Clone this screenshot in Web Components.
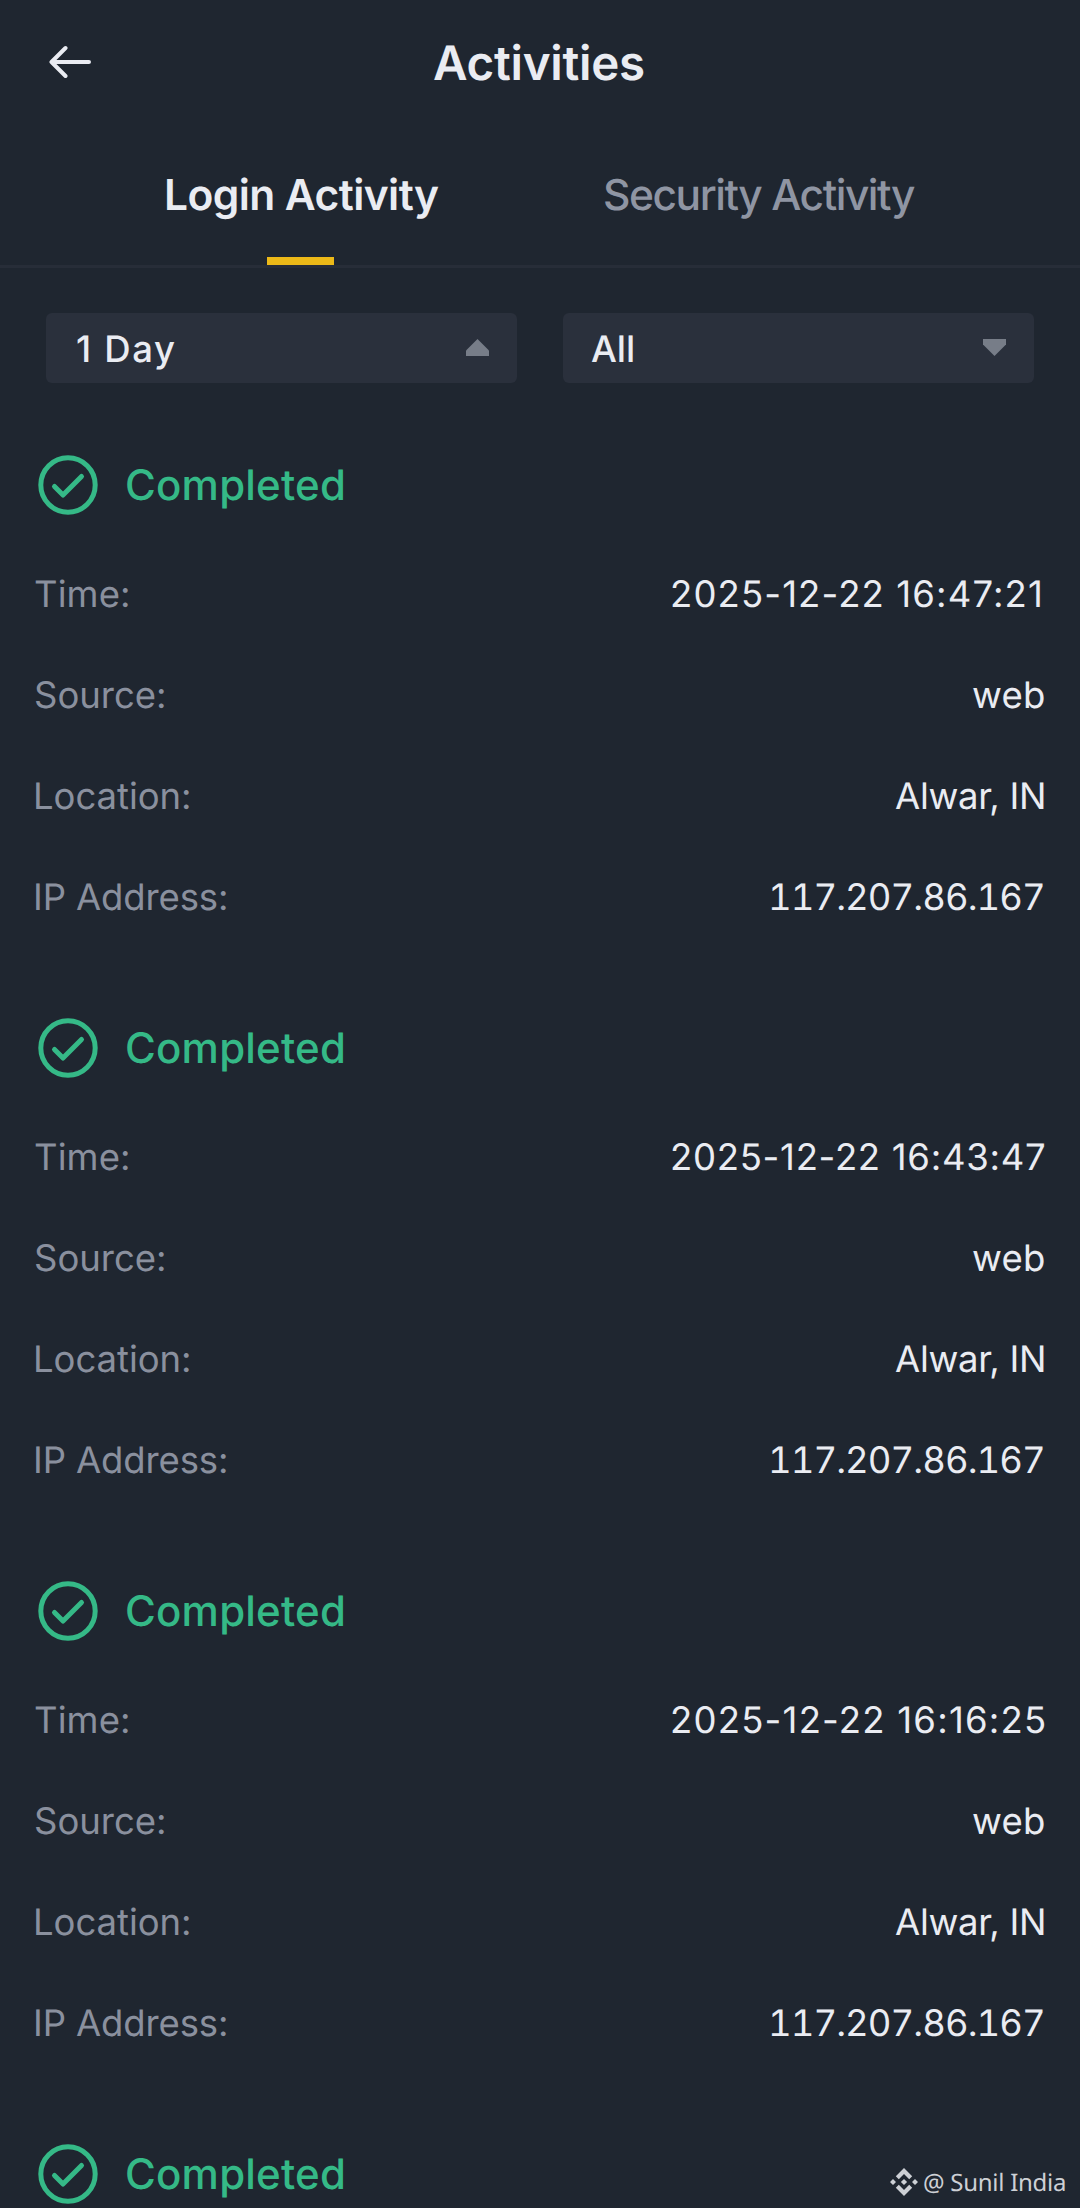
<!DOCTYPE html>
<html lang="en">
<head>
<meta charset="utf-8">
<title>Activities</title>
<style>
html,body{margin:0;background:#1f2630}
body{width:1080px;height:2208px;overflow:hidden;font-family:Inter,"Open Sans",sans-serif;color:#eaecf2;text-rendering:geometricPrecision}
</style>
</head>
<body>
<activity-screen></activity-screen>
<script>
function define(name, css, html, init) {
  const t = document.createElement('template');
  t.innerHTML = `<style>*{box-sizing:border-box}${css}</style>${html}`;
  customElements.define(name, class extends HTMLElement {
    connectedCallback() {
      if (this.shadowRoot) return;
      this.attachShadow({mode: 'open'}).append(t.content.cloneNode(true));
      if (init) init.call(this, this.shadowRoot);
    }
  });
}

/* Text run whose ink spans exactly the width given in "w".
   Tabular digits share one advance, so "tabular" runs take their side bearings from a "2". */
const ctx = document.createElement('canvas').getContext('2d');
define('fit-text', `:host{display:flex;flex:none;white-space:nowrap}
  :host([tabular]){font-variant-numeric:tabular-nums;font-kerning:none}
  span{display:block;flex:none}`, `<span></span>`, function (root) {
  const span = root.querySelector('span'), text = this.getAttribute('text'), w = +this.getAttribute('w');
  span.textContent = text;
  this.style.width = w + 'px';
  const cs = getComputedStyle(span);
  ctx.font = `${cs.fontWeight} ${cs.fontSize} ${cs.fontFamily}`;
  const m = ctx.measureText(this.hasAttribute('tabular') ? text.replace(/1/g, '2') : text);
  const left = -m.actualBoundingBoxLeft, right = m.width - m.actualBoundingBoxRight;
  let spacing = 0;
  for (let i = 0; i < 3; i++) {
    const ink = span.getBoundingClientRect().width - spacing - left - right;
    spacing += (w - ink) / (text.length - 1);
    span.style.letterSpacing = spacing + 'px';
  }
  span.style.marginLeft = -left + 'px';
});

define('app-header', `
  :host{display:grid;grid-template-columns:49px 385px 1fr;height:126px;align-items:start}
  svg{display:block;margin-top:45px;grid-column:2}
  fit-text{font-size:47.5px;font-weight:600;line-height:60px;margin-top:34px}`,
  `<svg width="44" height="34" viewBox="0 0 44 34" fill="none" stroke="#eaecf2" stroke-width="4" stroke-linecap="round" stroke-linejoin="round"><path d="M40 17H2.5M16.5 3L2.5 17L16.5 31"/></svg>
   <fit-text text="Activities" w="210"></fit-text>`);

define('tab-bar', `
  :host{display:flex;flex-direction:column;height:142px;border-bottom:3px solid #272d38}
  .tabs{display:flex;gap:166px;padding:40px 0 0 167px;height:131px;font-size:42.5px;line-height:60px}
  .on{font-weight:600}.off{color:#8f95a3;font-weight:500}
  .bar{width:67px;height:8px;margin-left:267px;background:#ecb918}`,
  `<div class="tabs"><fit-text class="on" text="Login Activity" w="272"></fit-text><fit-text class="off" text="Security Activity" w="310"></fit-text></div><div class="bar"></div>`);

define('filter-row', `:host{display:flex;gap:46px;padding:45px 46px 0;height:151px}`,
  `<select-field open text="1 Day" w="98"></select-field><select-field text="All" w="42"></select-field>`);

define('select-field', `:host{display:flex;align-items:center;width:471px;height:70px;border-radius:6px;background:#2a303c;padding:0 28px 0 28px;font-size:36.5px;font-weight:500;line-height:60px}
  :host([open]){padding-left:31px}
  fit-text{margin-top:1px}
  svg{display:block;flex:none;margin:0 0 1px auto}:host([open]) svg{transform:rotate(180deg)}`,
  `<svg width="23" height="17" viewBox="0 0 23 17"><path fill="#777d88" d="M0 0H23V5.5L11.5 17L0 5.5Z"/></svg>`,
  function (root) {
    const f = document.createElement('fit-text');
    f.setAttribute('text', this.getAttribute('text'));
    f.setAttribute('w', this.getAttribute('w'));
    root.insertBefore(f, root.querySelector('svg'));
  });

define('detail-row', `
  :host{display:flex;justify-content:space-between;height:101px;padding:1px 1px 0;font-size:36.5px;line-height:60px}
  .k{color:#8a909e}
  .v{color:#eaecf2}
  :host([k="Time:"]) .k{margin-left:-1px}`, ``,
  function (root) {
    for (const k of ['k', 'v']) {
      const f = document.createElement('fit-text');
      f.className = k;
      f.setAttribute('text', this.getAttribute(k));
      f.setAttribute('w', this.getAttribute(k + 'w'));
      if (k === 'v' && this.hasAttribute('numeric')) f.setAttribute('tabular', '');
      root.append(f);
    }
    root.lastChild.style.marginRight = (this.getAttribute('inset') || 0) + 'px';
  });

define('activity-entry', `
  :host{display:block;height:563px;padding:0 35px}
  .head{display:flex;gap:29px;padding:35px 0 0 3px;height:144px;color:#35b987}
  .head fit-text{font-size:42px;font-weight:500;line-height:60px;margin-top:2px}
  svg{display:block;flex:none}`,
  `<div class="head"><svg width="60" height="62" viewBox="0 0 60 62" fill="none" stroke="#35b987" stroke-width="5"><circle cx="30" cy="31" r="27.2"/><path d="M16.5 32.5L25 41L43.5 22.5" stroke-linecap="round" stroke-linejoin="round"/></svg>
   <fit-text text="Completed" w="216"></fit-text></div>
   <slot></slot>`);

define('water-mark', `
  :host{position:absolute;left:890px;top:2161px;display:flex;gap:6px;align-items:center;height:42px;color:#cdd0d5;font:24px/42px "Noto Sans",sans-serif}
  svg{display:block}fit-text{margin-top:1px}`,
  `<svg width="28" height="28" viewBox="0 0 28 28" fill="#cdd0d5"><path d="M14 0L22.2 8.2L19.2 11.2L14 6L8.8 11.2L5.8 8.2ZM14 28L22.2 19.8L19.2 16.8L14 22L8.8 16.8L5.8 19.8ZM3 11L6 14L3 17L0 14ZM25 11L28 14L25 17L22 14ZM14 10.9L17.1 14L14 17.1L10.9 14Z"/></svg>
   <fit-text text="@ Sunil India" w="141"></fit-text>`);

const entry = (time, w, inset) => `<activity-entry>
  <detail-row k="Time:" kw="93" v="2025-12-22 ${time}" vw="${w}" inset="${inset}"></detail-row>
  <detail-row k="Source:" kw="128" v="web" vw="71"></detail-row>
  <detail-row k="Location:" kw="153" v="Alwar, IN" vw="149"></detail-row>
  <detail-row k="IP Address:" kw="190" v="117.207.86.167" vw="274" numeric></detail-row>
</activity-entry>`;

define('activity-screen', `:host{display:block;position:relative;width:1080px;height:2208px;overflow:hidden;background:#1f2630}`,
  `<app-header></app-header><tab-bar></tab-bar><filter-row></filter-row>
   ${entry('16:47:21', 368, 4)}${entry('16:43:47', 372, 0)}${entry('16:16:25', 372, 0)}
   <activity-entry></activity-entry><water-mark></water-mark>`);
</script>
</body>
</html>
